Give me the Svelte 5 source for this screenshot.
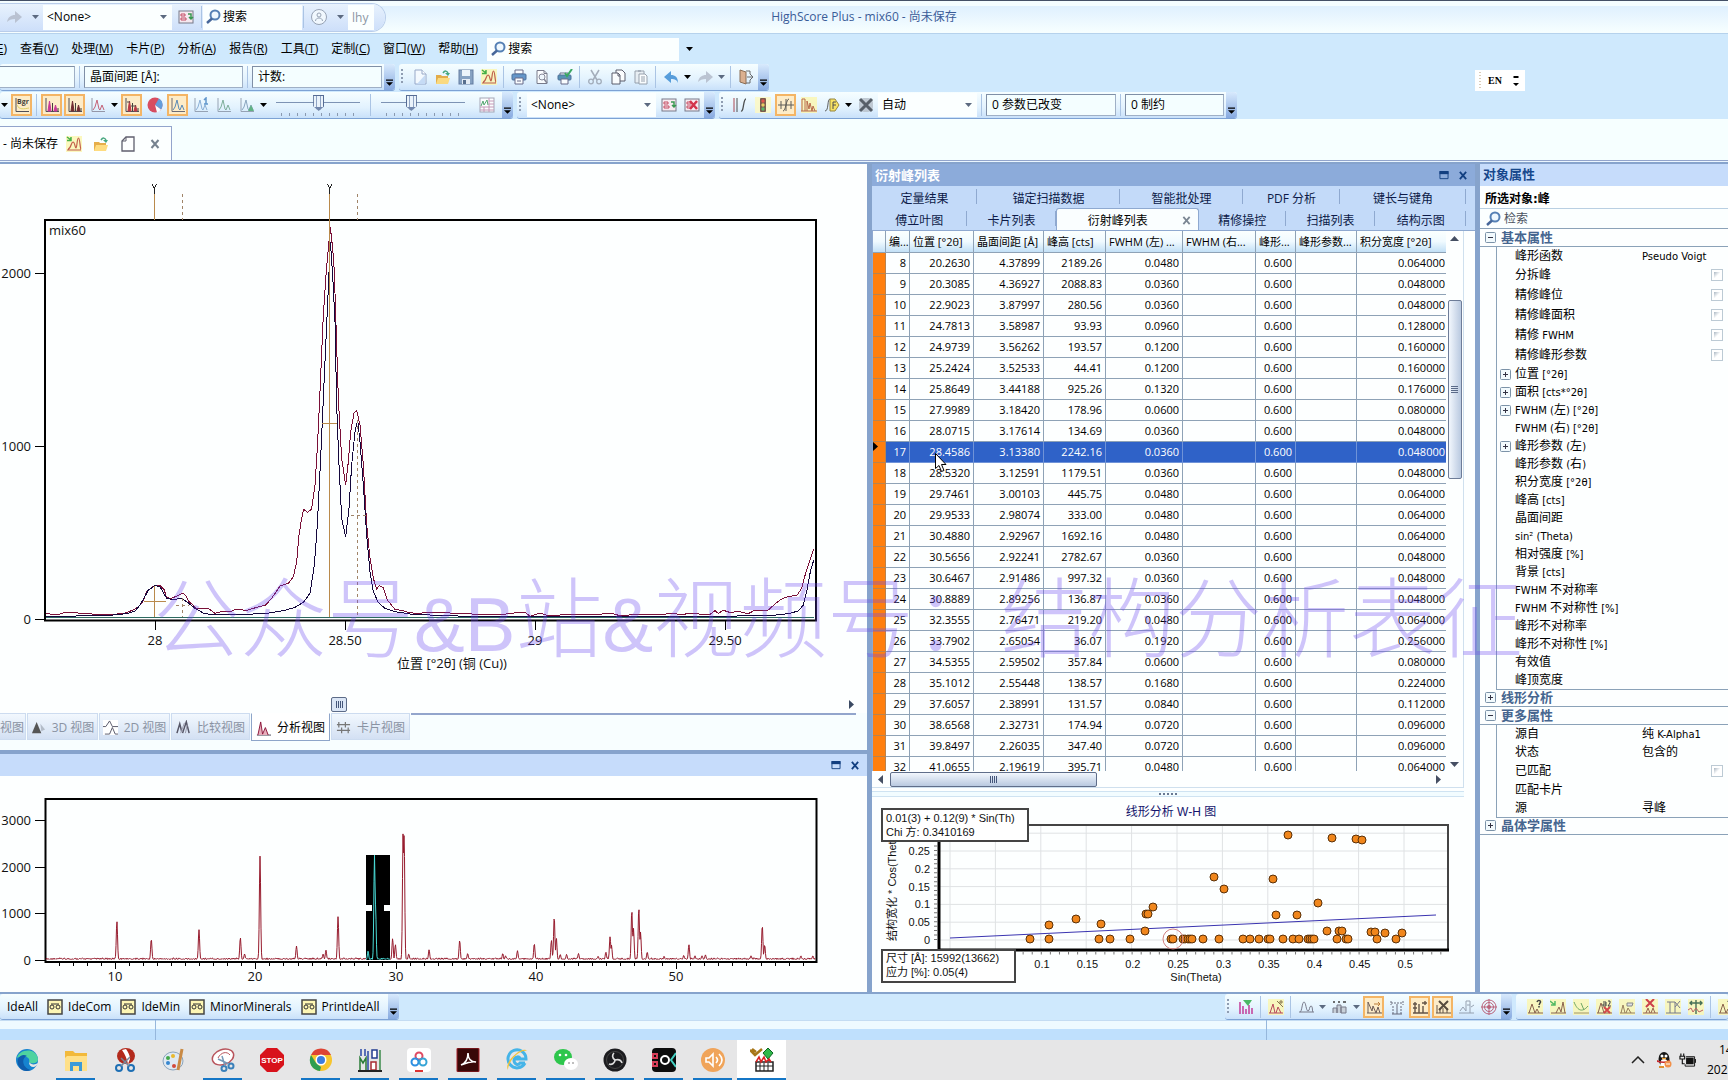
<script>
  const peakIcon = (axis, line, extra = '') =>
    `<path d="M2 1v13.500h13" fill="none" stroke="${axis}"/><path d="M3 13l2-3 2-7 2 9 1 1 2-5 2 5" fill="none" stroke="${line}"/>${extra}`;
  const filledPeak = (fill) =>
    `<path d="M2 1v13.500h13" fill="none" stroke="#334"/><path d="M4 14l1.500-10 1.500 10zM10 14l1.500-6 1.500 6z" fill="${fill}" stroke="${fill}"/><path d="M8.500 6v8m5.500-3v3" stroke="#222"/>`;
  const yellow = '<rect width="16" height="16" fill="#fbf7b4"/>';
  const page = '<path d="M3 1.500h7l3 3v10H3z" fill="#fff" stroke="#667"/><path d="M10 1.500v3h3" fill="none" stroke="#667"/>';
  const cards = '<rect x="1" y="2" width="14" height="12" fill="#fbe9ee" stroke="#667"/><path d="M3 5h4v2H3zM3 9h5v2H3z" fill="none" stroke="#c03048"/>';

  const icons = {
    redoGray: '<path d="M1 13c1-5 4-7 8-7V2l7 6-7 6v-4c-4 0-6 1-8 3z" fill="#b4bccb"/>',
    undo: '<path d="M15 14c0-6-3-8-7-8V2L1 8l7 6v-4c4 0 6 1 7 4z" fill="#3f8fd6"/>',
    cards: cards + '<path d="M10 5h3v5m-2-2l2 2 2-2" fill="none" stroke="#1b8a35" stroke-width="1.500"/>',
    cardsDel: cards + '<path d="M6 4l7 8m0-8l-7 8" stroke="#d0142c" stroke-width="2.500"/>',
    search: '<circle cx="10" cy="6" r="4.500" fill="#eef8ff" stroke="#5580b5" stroke-width="2"/><path d="M7 9.500L2 14" stroke="#47679a" stroke-width="2.500"/>',
    user: '<circle cx="8" cy="8" r="7.500" fill="#f5fbff" stroke="#8c97a8"/><circle cx="8" cy="6" r="2" fill="none" stroke="#8c97a8"/><path d="M4.500 12c0-4 7-4 7 0" fill="none" stroke="#8c97a8"/>',
    newDoc: '<path d="M3 1h7l4 4v10H3z" fill="#f7fbff" stroke="#8a9cc0"/><path d="M13 6v9H5z" fill="#c2d8f4"/><path d="M10 1v4h4" fill="#fff" stroke="#8a9cc0"/>',
    page: '<path d="M6 1h8v14H2V5z" fill="#fff" stroke="#445" stroke-width="1.300"/><path d="M6 1v4H2" fill="none" stroke="#445"/>',
    open: '<path d="M1 6h5l1 1h6v8H1z" fill="#e3a02b"/><path d="M3 9h12l-2 6H1z" fill="#ffd66b"/><path d="M8 4c2-3 4-2 5 0" fill="none" stroke="#2a9a6a" stroke-width="1.500"/><path d="M10 4h5l-2 3z" fill="#2a9a6a"/>',
    save: '<rect x="1" y="1" width="14" height="14" fill="#7794b8" stroke="#506a92"/><rect x="4" y="1" width="8" height="6" fill="#eef4fa"/><path d="M4 10h8v5H4z" fill="#e6ecf4"/><path d="M5 11h3v4H5z" fill="#40587a"/>',
    scan: yellow + '<path d="M1 14h14M2 13c3 0 3-7 5-7s2 6 3 6 1-10 2.500-10S14 13 15 13" fill="none" stroke="#b8442c" stroke-width="1.200"/><path d="M1 1l4 3m0-3v3.500H1" fill="none" stroke="#28a428" stroke-width="1.500"/>',
    print: '<path d="M4 1h8v4H4z" fill="#fff" stroke="#557"/><rect x="1" y="5" width="14" height="6" rx="1" fill="#4f86c0" stroke="#345a8a"/><path d="M4 9h8v6H4z" fill="#fff" stroke="#557"/><path d="M6 12h4" stroke="#557"/>',
    preview: page + '<circle cx="8" cy="8" r="3" fill="#f2f8fc" stroke="#778"/><path d="M10 10l3 4" stroke="#778" stroke-width="1.500"/>',
    quick: '<path d="M3 4h8v3H3z" fill="#fff" stroke="#557"/><rect x="1" y="6" width="13" height="5" rx="1" fill="#3f82a8" stroke="#345a8a"/><path d="M4 10h7v5H4z" fill="#fff" stroke="#557"/><path d="M8 4l2 3 5-7" fill="none" stroke="#1d9b48" stroke-width="2"/>',
    cut: '<path d="M4 1l6 10M12 1L6 11" stroke="#99a2b0" stroke-width="1.500"/><circle cx="4" cy="12.500" r="2.300" fill="none" stroke="#99a2b0" stroke-width="1.300"/><circle cx="12" cy="12.500" r="2.300" fill="none" stroke="#99a2b0" stroke-width="1.300"/>',
    copy: '<path d="M6 1h6l3 3v8H6z" fill="#fff" stroke="#445"/><path d="M2 4h6l2 2v9H2z" fill="#fff" stroke="#445"/><path d="M8 4v3h2" fill="none" stroke="#445"/>',
    paste: '<path d="M2 2h9v12H2z" fill="#e8edf2" stroke="#8a93a0"/><path d="M5 1h3v2H5z" fill="#9aa3b0"/><path d="M6 5h6l2 2v8H6z" fill="#fff" stroke="#8a93a0"/><path d="M8 8h4M8 10h4M8 12h4" stroke="#8a93a0"/>',
    exit: '<path d="M8 2h4v3m0 6v3H8" fill="none" stroke="#555"/><path d="M2 1l6 2v12l-6-2z" fill="#d9a47c" stroke="#7b5638"/><path d="M9 8h5m-2-3l3 3-3 3" fill="none" stroke="#555"/>',
    bgr: '<path d="M2 1v13.500h13" fill="none" stroke="#334"/><path d="M3 8c2 5 7 4 12 3" fill="none" stroke="#d8cc58"/><text x="3" y="7" font-size="7" font-weight="700" font-family="Open Sans" fill="#222">Bgr</text>',
    peakPink: filledPeak('#c01a90'),
    peakDark: filledPeak('#5a0c18'),
    peakRose: peakIcon('#889', '#c0485e'),
    peakRed: filledPeak('#b01c30') + '<path d="M3 5h3m1 4h5" stroke="#333"/>',
    pie: '<circle cx="8" cy="8" r="7.500" fill="#d53146"/><path d="M8 8L12 1.500a7.500 7.500 0 0 1 2 11z" fill="#4e8fd6"/><path d="M8 8l6 4.500a7 7 0 0 1-4 3z" fill="#fff"/>',
    peakBlue: peakIcon('#556', '#3b78b4'),
    peakBlue1: peakIcon('#8a96a8', '#7aa3cf', '<path d="M11 3l2-2v6m-2 0h4" fill="none" stroke="#4a86c4" stroke-width="1.500"/>'),
    peakGreen: peakIcon('#8a96a8', '#6ca389'),
    peakFilled: peakIcon('#8a96a8', '#7a98b4', '<path d="M9 14l3-6 3 6z" fill="#4ba870"/>'),
    grid: '<rect x="1" y="1" width="14" height="14" fill="#fff" stroke="#99a"/><path d="M1 10h14M1 13h14M10 1v14M10 4h5M10 7h5M5 10v5" stroke="#c08aac"/><path d="M2 9l2-5 1 4 3-5 1 5" fill="none" stroke="#3a9a58"/>',
    integral: '<path d="M2 1v14" stroke="#a02a36"/><path d="M5 1v14" stroke="#333"/><path d="M9 14c3 1 2-12 5-12" fill="none" stroke="#333" stroke-width="1.300"/>',
    traffic: '<rect width="16" height="16" fill="#fdf9c4"/><rect x="5" y="1" width="6" height="14" rx="1" fill="#6a4430"/><circle cx="8" cy="4" r="1.700" fill="#e23b30"/><circle cx="8" cy="8" r="1.700" fill="#e8c84a"/><circle cx="8" cy="12" r="1.700" fill="#44b050"/>',
    fit: '<path d="M0 8h16M3 4v8M13 4v8" stroke="#444"/><path d="M5 14c3 0 3-12 6-12M8 2v12" fill="none" stroke="#444"/>',
    multi: yellow + '<path d="M1 14V2h3v12M6 14V4l2 8 1-6 2 8 1-5 2 5M0 14h16" fill="none" stroke="#b0522c"/>',
    fx: '<path d="M1 14c4 0 2-12 5-12" fill="none" stroke="#444"/><path d="M6 2h5l4 6-4 6H6z" fill="#fbe04a" stroke="#8a7420"/><path d="M9 12V5h3M9 8h3" fill="none" stroke="#333"/>',
    cross: '<rect x="1" y="1" width="14" height="14" rx="5" fill="#b9c2cc"/><path d="M2 2l12 12M14 2L2 14" stroke="#3f4650" stroke-width="3"/>',
    tri3d: '<path d="M6 2l5 12H1z" fill="#555"/><path d="M10 4l5 6-4 2z" fill="#b3bcc8"/>',
    two: '<rect width="16" height="16" fill="#fff"/><path d="M0 7h3l4-6 3 6h6M2 15h5l3-7 3 7h3" fill="none" stroke="#556"/>',
    compare: '<path d="M1 14l3-10 2 8M7 14l4-12 3 12" fill="none" stroke="#556" stroke-width="1.600"/><path d="M5 14l4-11M10 14l2-9" stroke="#99a"/>',
    analyze: '<path d="M1 15h15" stroke="#445"/><path d="M2 15L5 1l2 13 3-7 3 8" fill="#e7aebb" stroke="#8b1238"/>',
    cardview: '<path d="M1 5h14M1 11h14M3 2v6M10 2v6M6 8v6M13 8v6" stroke="#777" stroke-width="1.300"/>',
    script: '<rect x="1" y="1" width="14" height="14" fill="#fdf6b4" stroke="#444" stroke-width="1.500"/><circle cx="5" cy="8" r="2" fill="none" stroke="#333"/><circle cx="11" cy="8" r="2" fill="none" stroke="#333"/><path d="M4 5h8" stroke="#333"/>',
    bars: '<path d="M2 3v12M5 7v8M8 10v5M11 6v9M14 9v6" stroke="#c02a90" stroke-width="1.600"/><path d="M5 1h9l-4 6z" fill="#2fae4a"/>',
    wand: yellow + '<path d="M1 14h14M2 14l3-9 2 9M8 14l2-6 3 6" fill="none" stroke="#b02a40"/><path d="M9 2l6 6M13 1v4m2-2h-4" stroke="#776030"/>',
    plain: '<path d="M1 13h15M2 13c2 0 2-10 4-10s2 9 4 9 1-5 3-5 1 6 2 6" fill="none" stroke="#667"/>',
    histo: '<path d="M1 14V9h4v5M5 14V6h4v8M9 14V8h5v6z" fill="#c3cad2" stroke="#667"/><path d="M1 3h2m3 0h2m3 0h3" stroke="#555" stroke-width="2"/>',
    profile: '<path d="M1 14h15M2 14V3l4 9 1-5 3 7 2-6 2 6" fill="none" stroke="#544"/><path d="M8 5h6m-2-2l2 2-2 2" fill="none" stroke="#b06a20"/>',
    spacing: '<path d="M2 4h12M2 2v4m12-4v4M4 7v8m8-8v8" fill="none" stroke="#556" stroke-dasharray="2 1"/><path d="M8 5v10M3 15h10" stroke="#556"/>',
    addPeak: '<path d="M1 14h15M3 3v11M7 5v9M11 7v7M1 5h4M1 9h4M10 4h5m-2-2v4" stroke="#4a3a30" stroke-width="1.400"/>',
    delPeak: '<path d="M1 14h15M2 14V6M5 14V9M8 14V9m4 5V9" stroke="#4a3a30"/><path d="M4 2l9 9M13 2L4 11" stroke="#3c3026" stroke-width="2"/>',
    gray: '<path d="M1 14h15M2 12l3-4 3 4V2h4v12M9 6h3m1 2l3-2" fill="none" stroke="#8a94a4"/>',
    target: '<circle cx="8" cy="8" r="7" fill="none" stroke="#b44a64"/><circle cx="8" cy="8" r="4.500" fill="none" stroke="#b44a64"/><circle cx="8" cy="8" r="2" fill="#b44a64"/><path d="M8 0v16M0 8h16" stroke="#b44a64"/>',
    ask: yellow + '<path d="M1 14h15M2 14l3-9 3 9M8 14l2-4 2 4" fill="none" stroke="#7b4a30"/><path d="M10 3c1-3 5-1 3 1l-1 2m0 1v1.500" fill="none" stroke="#222" stroke-width="1.500"/>',
    insert: yellow + '<path d="M1 14h15M6 14l3-6 2 5 2-10 2 11" fill="none" stroke="#7b4a30"/><path d="M0 2l5 4m0-4v4H1" fill="none" stroke="#3bb04a" stroke-width="1.500"/>',
    curve: yellow + '<path d="M1 14h15" stroke="#98864a"/><path d="M1 3c4 10 9 10 14 4M8 4l3 7" fill="none" stroke="#5a9a4a"/>',
    alpha: yellow + '<path d="M1 14h15M2 14L5 4l3 10" fill="none" stroke="#7b4a30"/><path d="M7 3h3v4H7V5h3M12 2h2v2l-2 3h3" fill="none" stroke="#222"/><path d="M8 8l6 6m0-6l-6 6" stroke="#d02a2a" stroke-width="2"/>',
    smooth: yellow + '<path d="M1 14h15M2 14l2-8 2 8M7 14l2-5 3 5" fill="none" stroke="#8a6a40"/><path d="M8 4l6 0-1 3H8z" fill="#ddd" stroke="#777"/>',
    strip: yellow + '<path d="M1 14h15M4 14l2-5 2 5M9 14l2-5 2 5" fill="none" stroke="#8a4a30"/><path d="M4 0l8 8M12 0L4 8" stroke="#c8202a" stroke-width="2"/>',
    clip: yellow + '<path d="M1 14h15M2 3h8v11M5 14V3M10 3l5 6M15 2l-5 6" fill="none" stroke="#667"/>',
    shift: yellow + '<path d="M2 4h12M4 2L2 4l2 2m8-4l2 2-2 2M8 1v14" fill="none" stroke="#2c5a3a" stroke-width="1.400"/><path d="M0 11l3-2 2 4 3-4 3 4 4-2" fill="none" stroke="#b84848"/>',
  };

  const taskIcons = {
    edge: '<circle cx="12" cy="12" r="11" fill="#1683cf"/><path d="M2 10C4 1 21-1 23 11c0 5-7 5-9 3 2-5-6-7-12-4z" fill="#4fd3a0"/><path d="M12 8c-6 2-5 12 4 14-9 4-15-5-13-11 2-4 6-5 9-3z" fill="#0f5cab"/><path d="M14 14c2 3 6 3 9 1-2 6-9 5-9-1z" fill="#e6e6e6"/>',
    folder: '<path d="M1 3h8l2 2h12v18H1z" fill="#f2b93b"/><path d="M3 8h20v15H1V10z" fill="#ffe089"/><path d="M6 14h12v9h-3v-5H9v5H6z" fill="#3c9bd8"/>',
    snip: '<ellipse cx="13" cy="8" rx="9" ry="8" fill="#b32a1c"/><path d="M9 2c3 4 5 9 6 14l2-5c0-4-2-7-4-10z" fill="#fff"/><circle cx="6" cy="20" r="3" fill="none" stroke="#1e6fb4" stroke-width="2"/><circle cx="18" cy="20" r="3" fill="none" stroke="#1e6fb4" stroke-width="2"/><path d="M8 18L17 9M16 18L8 10" stroke="#789" stroke-width="1.500"/>',
    paint: '<ellipse cx="11" cy="13" rx="10" ry="9" fill="#dfe9f2" stroke="#8aa4bc"/><circle cx="6" cy="10" r="2" fill="#43a84a"/><circle cx="11" cy="8" r="2" fill="#e9b92f"/><circle cx="6" cy="15" r="2" fill="#3686d0"/><circle cx="12" cy="18" r="2" fill="#d24a3c"/><path d="M20 1l-4 21" stroke="#c98a45" stroke-width="3"/>',
    sketch: '<ellipse cx="12" cy="9" rx="11" ry="7.500" fill="#fff" stroke="#b8545c" stroke-width="1.500" transform="rotate(-20 12 9)"/><path d="M7 10C10 4 16 3 19 7" fill="none" stroke="#b8545c"/><circle cx="13" cy="20.500" r="2.500" fill="none" stroke="#3a80ba" stroke-width="2"/><circle cx="20" cy="18" r="2.500" fill="none" stroke="#3a80ba" stroke-width="2"/><path d="M11 8l3 10M18 16L7 11" stroke="#7698b8" stroke-width="1.500"/>',
    stop: '<path d="M7 0h10l7 7v10l-7 7H7l-7-7V7z" fill="#d8121b"/><text x="12" y="15" text-anchor="middle" font-size="8" font-weight="700" font-family="Liberation Sans" fill="#fff">STOP</text>',
    chrome: '<circle cx="12" cy="12" r="11" fill="#f7c52e"/><path d="M2 7a11 11 0 0 1 20 0H12z" fill="#dd4335"/><path d="M2 7l5 8 5 4-1 4A11 11 0 0 1 2 7z" fill="#2f9e51"/><circle cx="12" cy="12" r="5.500" fill="#fff"/><circle cx="12" cy="12" r="4" fill="#3c7de0"/>',
    mdi: '<path d="M2 22V10l3 5 3-5v12" fill="none" stroke="#2a7c38" stroke-width="1.500"/><path d="M13 22v-8h5v8z" fill="#fff" stroke="#a82c34" stroke-width="1.500"/><path d="M3 1v7M7 1v7M10 3v19" stroke="#2b48a8" stroke-width="1.500"/><path d="M14 2h5v8h-5z" fill="#fff" stroke="#223c90" stroke-width="1.500"/><path d="M22 2v20" stroke="#3a8a4a" stroke-width="1.500"/><path d="M0 23h24" stroke="#222" stroke-width="2"/>',
    cloud: '<rect width="24" height="24" rx="4" fill="#fff"/><circle cx="12" cy="8" r="3.500" fill="none" stroke="#e04a62" stroke-width="2"/><circle cx="8" cy="14" r="3.500" fill="none" stroke="#2d8fe2" stroke-width="2"/><circle cx="16" cy="14" r="3.500" fill="none" stroke="#35a4d6" stroke-width="2"/><path d="M8 23h8" stroke="#d33" stroke-width="2"/>',
    acrobat: '<rect x="1" width="22" height="24" rx="1" fill="#380808" stroke="#a82028"/><path d="M5 17c5-2 7-7 7-12 0 6 3 9 8 9-6-1-10 1-15 3z" fill="none" stroke="#fff" stroke-width="1.600"/>',
    ie: '<path d="M20 15A9 9 0 1 1 21 11H9M20 15h-5c-2 3-6 1-6-3 1-4 6-4 6-1" fill="none" stroke="#45b4e8" stroke-width="3"/><path d="M3 22C-2 14 18-3 22 3c-8-2-19 11-19 19z" fill="#eec33c"/>',
    wechat: '<ellipse cx="9" cy="9" rx="9" ry="8" fill="#2dc64c"/><ellipse cx="17" cy="16" rx="7" ry="6" fill="#fff"/><circle cx="6" cy="7" r="1.300" fill="#fff"/><circle cx="12" cy="7" r="1.300" fill="#fff"/><circle cx="15" cy="15" r="1" fill="#aaa"/><circle cx="19" cy="15" r="1" fill="#aaa"/>',
    obs: '<circle cx="12" cy="12" r="11.500" fill="#1c1c1f"/><circle cx="12" cy="12" r="8.500" fill="none" stroke="#444"/><path d="M12 12C9 10 9 7 11 5M12 12c4-1 6 0 7 3M12 12c0 3-3 5-6 4" fill="none" stroke="#ddd" stroke-width="1.700"/>',
    oc: '<rect width="24" height="24" rx="4" fill="#0d0d0d"/><circle cx="13" cy="12" r="4" fill="none" stroke="#fff" stroke-width="2"/><path d="M24 5l-5 7 5 7" fill="none" stroke="#44d0c2" stroke-width="2"/><rect x="1" y="6" width="4" height="4" fill="none" stroke="#d8405a" stroke-width="2"/><rect x="1" y="14" width="4" height="4" fill="none" stroke="#d8405a" stroke-width="2"/>',
    sound: '<circle cx="12" cy="12" r="12" fill="#f0a45a"/><path d="M5 10h3l4-4v12l-4-4H5z" fill="none" stroke="#fff" stroke-width="1.600"/><path d="M15 9c2 2 2 4 0 6M18 6c4 4 4 8 0 12" fill="none" stroke="#fff" stroke-width="1.600"/>',
    highscore: '<path d="M0 2l5 5 7-6M2 1l4 3" fill="none" stroke="#a77618" stroke-width="2.500"/><path d="M18 0l5 5-5 6-5-6z" fill="#2fb84a" stroke="#0d6522"/><rect x="6" y="14" width="17" height="9" fill="#fff" stroke="#222" stroke-width="1.500"/><path d="M6 18h17M10 15v8M14 15v8M18 15v8" stroke="#222"/><path d="M6 14l3-5 2 5 3-5 2 5 3-3 2 3" fill="none" stroke="#d82020" stroke-width="1.500"/>',
  };

  const taskbar = [
    ['edge', 'Edge', ''], ['folder', '文件资源管理器', 'run'], ['snip', '截图', ''], ['paint', '画图', ''],
    ['sketch', '截图工具', 'run'], ['stop', 'Stop', ''], ['chrome', 'Chrome', 'run'], ['mdi', 'MDI', 'run'],
    ['cloud', '网盘', 'run'], ['acrobat', 'Acrobat', 'run'], ['ie', 'Internet Explorer', 'run'], ['wechat', '微信', 'run'],
    ['obs', 'OBS', 'run'], ['oc', 'oCam', 'run'], ['sound', '音量', 'run'], ['highscore', 'HighScore Plus', 'run active'],
  ];

  const menus = [['查看', 'V'], ['处理', 'M'], ['卡片', 'P'], ['分析', 'A'], ['报告', 'R'], ['工具', 'T'], ['定制', 'C'], ['窗口', 'W'], ['帮助', 'H']];

  // '|' separator, 'v' small drop-down arrow, '*' prefix marks a pressed button
  const fileTools = ['newDoc', 'open', 'save', 'scan', '|', 'print', 'preview', 'quick', '|', 'cut', 'copy', 'paste', '|', 'undo', 'v', 'redoGray', 'vg', '|', 'exit'];
  const viewTools = ['v', '*bgr', '|', '*peakPink', '*peakDark', 'peakRose', 'v', '*peakRed', 'pie', '*peakBlue', 'peakBlue1', 'peakGreen', 'peakFilled', 'v'];
  const fitTools = ['integral', 'traffic', '*fit', 'multi', 'fx', 'v', 'cross'];
  const peakTools = ['bars', '|', 'wand', '|', 'plain', 'vg', 'histo', 'vg', '*profile', 'spacing', '*addPeak', '*delPeak', 'gray', 'target'];
  const treatTools = ['ask', 'insert', 'curve', 'alpha', 'smooth', 'strip', 'clip', 'shift', '|', 'ask'];
  const scripts = ['IdeAll', 'IdeCom', 'IdeMin', 'MinorMinerals', 'PrintIdeAll'];

  const viewTabs = [['', '视图', 'cut'], ['tri3d', '3D 视图', ''], ['two', '2D 视图', ''], ['compare', '比较视图', 'wide'], ['analyze', '分析视图', 'wide active'], ['cardview', '卡片视图', 'wide']];

  const tabsTop = [['定量结果', 105], ['锚定扫描数据', 143], ['智能批处理', 123], ['PDF 分析', 97], ['键长与键角', 126]];
  const tabsBottom = [['傅立叶图', 95], ['卡片列表', 90], ['衍射峰列表', 141], ['精修操控', 87], ['扫描列表', 90], ['结构示图', 91]];

  const columns = [['', 13], ['编...', 24], ['位置 [°2θ]', 64], ['晶面间距 [Å]', 70], ['峰高 [cts]', 62], ['FWHM (左) ...', 77], ['FWHM (右...', 73], ['峰形...', 40], ['峰形参数...', 61], ['积分宽度 [°2θ]', 90]];
  const peaks = [
    [8, '20.2630', '4.37899', '2189.26', '0.0480', '0.064000'],
    [9, '20.3085', '4.36927', '2088.83', '0.0360', '0.048000'],
    [10, '22.9023', '3.87997', '280.56', '0.0360', '0.048000'],
    [11, '24.7813', '3.58987', '93.93', '0.0960', '0.128000'],
    [12, '24.9739', '3.56262', '193.57', '0.1200', '0.160000'],
    [13, '25.2424', '3.52533', '44.41', '0.1200', '0.160000'],
    [14, '25.8649', '3.44188', '925.26', '0.1320', '0.176000'],
    [15, '27.9989', '3.18420', '178.96', '0.0600', '0.080000'],
    [16, '28.0715', '3.17614', '134.69', '0.0360', '0.048000'],
    [17, '28.4586', '3.13380', '2242.16', '0.0360', '0.048000'],
    [18, '28.5320', '3.12591', '1179.51', '0.0360', '0.048000'],
    [19, '29.7461', '3.00103', '445.75', '0.0480', '0.064000'],
    [20, '29.9533', '2.98074', '333.00', '0.0480', '0.064000'],
    [21, '30.4880', '2.92967', '1692.16', '0.0480', '0.064000'],
    [22, '30.5656', '2.92241', '2782.67', '0.0360', '0.048000'],
    [23, '30.6467', '2.91486', '997.32', '0.0360', '0.048000'],
    [24, '30.8889', '2.89256', '136.87', '0.0360', '0.048000'],
    [25, '32.3555', '2.76471', '219.20', '0.0480', '0.064000'],
    [26, '33.7902', '2.65054', '36.07', '0.1920', '0.256000'],
    [27, '34.5355', '2.59502', '357.84', '0.0600', '0.080000'],
    [28, '35.1012', '2.55448', '138.57', '0.1680', '0.224000'],
    [29, '37.6057', '2.38991', '131.57', '0.0840', '0.112000'],
    [30, '38.6568', '2.32731', '174.94', '0.0720', '0.096000'],
    [31, '39.8497', '2.26035', '347.40', '0.0720', '0.096000'],
    [32, '41.0655', '2.19619', '395.71', '0.0480', '0.064000'],
  ];
  let selected = $state(17);

  // kind: c = tick box, e = expandable, p = plain
  const basicProps = [
    ['峰形函数', 'p', 'Pseudo Voigt'], ['分拆峰', 'c'], ['精修峰位', 'c'], ['精修峰面积', 'c'], ['精修 FWHM', 'c'], ['精修峰形参数', 'c'],
    ['位置 [°2θ]', 'e'], ['面积 [cts*°2θ]', 'e'], ['FWHM (左) [°2θ]', 'e'], ['FWHM (右) [°2θ]', 'p'], ['峰形参数 (左)', 'e'], ['峰形参数 (右)', 'p'],
    ['积分宽度 [°2θ]', 'p'], ['峰高 [cts]', 'p'], ['晶面间距', 'p'], ['sin² (Theta)', 'p'], ['相对强度 [%]', 'p'], ['背景 [cts]', 'p'],
    ['FWHM 不对称率', 'p'], ['FWHM 不对称性 [%]', 'p'], ['峰形不对称率', 'p'], ['峰形不对称性 [%]', 'p'], ['有效值', 'p'], ['峰顶宽度', 'p'],
  ];
  const moreProps = [['源自', 'p', '纯 K-Alpha1'], ['状态', 'p', '包含的'], ['已匹配', 'c'], ['匹配卡片', 'p'], ['源', 'p', '寻峰']];
  const groups = [['基本属性', basicProps], ['线形分析', null], ['更多属性', moreProps], ['晶体学属性', null]];

  const runs = (text) => text.match(/[\u4e00-\u9fff]+|[^\u4e00-\u9fff]+/g) ?? [];
  const isHan = (run) => /[\u4e00-\u9fff]/.test(run);

  const measured = '138,1345 170,1350 195,1342 220,1342 245,1346 260,1344 275,1347 320,1348 350,1347 375,1344 400,1335 418,1323 430,1307 440,1280 455,1267 465,1262 480,1261 492,1273 500,1298 515,1300 530,1293 548,1284 556,1290 565,1308 590,1330 625,1330 645,1345 660,1341 690,1341 705,1333 720,1333 738,1337 760,1330 797,1320 815,1300 840,1263 865,1255 880,1235 890,1190 897,1110 905,1060 911,1033 922,1042 935,1032 945,960 952,850 960,680 970,450 978,330 985,250 991,187 998,250 1003,320 1008,480 1015,700 1025,880 1037,960 1045,890 1052,800 1062,745 1070,736 1080,780 1090,900 1100,1080 1110,1180 1120,1240 1130,1272 1138,1262 1150,1268 1162,1305 1185,1333 1205,1336 1225,1342 1255,1346 1275,1342 1330,1342 1380,1347 1405,1344 1425,1350 1500,1350 1530,1345 1575,1341 1590,1354 1620,1344 1645,1352 1700,1349 1750,1348 1780,1350 1830,1344 1860,1352 1900,1349 1960,1350 2010,1346 2050,1348 2070,1345 2110,1348 2130,1348 2145,1337 2155,1345 2170,1336 2195,1344 2210,1338 2245,1346 2260,1338 2305,1335 2325,1317 2345,1302 2365,1294 2390,1292 2405,1270 2418,1220 2430,1185 2441,1153';
  const calculated = '138,1354 320,1352 380,1346 405,1338 420,1320 432,1300 445,1275 465,1262 480,1265 500,1300 515,1303 545,1301 560,1310 585,1330 610,1344 640,1350 690,1350 740,1348 800,1345 850,1337 885,1327 910,1312 930,1285 943,1200 952,1080 962,880 970,700 980,480 988,300 991,230 998,330 1005,470 1010,720 1017,900 1025,1060 1037,1115 1047,1030 1055,900 1065,800 1073,765 1080,830 1090,960 1100,1110 1110,1220 1120,1280 1135,1313 1155,1330 1185,1340 1230,1347 1290,1350 1400,1354 2250,1353 2320,1351 2365,1346 2395,1338 2410,1320 2420,1280 2432,1215 2441,1186';

  // overview scan: [2theta, counts]
  const lines = [
    [10.1, 830], [12.55, 450], [15.95, 650], [18.9, 480], [19.2, 130], [20.3, 2230], [22.9, 300], [24.8, 130], [25, 210], [25.86, 930],
    [28, 190], [28.46, 2250], [28.53, 1200], [29.75, 460], [29.95, 330], [30.5, 2750], [30.57, 2700], [30.9, 130], [32.35, 220], [34.53, 420],
    [35.1, 140], [37.6, 140], [37.8, 90], [38.65, 200], [39.85, 350], [41.07, 420], [41.27, 930], [41.42, 480], [41.7, 120], [42.15, 120],
    [43, 140], [44.4, 80], [44.95, 170], [45.25, 500], [45.35, 320], [46.8, 1070], [46.92, 680], [47.3, 1120], [47.42, 600], [47.9, 170],
    [49.1, 80], [50.5, 100], [50.87, 330], [51.3, 90], [51.8, 90], [52.05, 110], [55.3, 90], [56.1, 740], [56.27, 320], [58.85, 90], [59.7, 90],
  ];
  const scan = [];
  for (let i = 0; i <= 1538; i++) {
    const px = 46 + i / 2;
    const theta = 10 + (px - 115.5) / 14.03;
    const noise = Math.abs(Math.sin(i * 12.9898) * 43758.5453) % 1;
    let counts = 14 + noise * noise * 32;
    for (const [at, height] of lines) {
      counts = Math.max(counts, height * Math.exp(-(((theta - at) / 0.065) ** 2)));
    }
    scan.push([px, 184 - counts * 0.0466]);
  }
  const toPoints = (list) => list.map(([x, y]) => `${x},${y.toFixed(1)}`).join(' ');
  const scanPoints = toPoints(scan);
  const zoomPoints = toPoints(scan.filter(([x]) => x >= 366 && x <= 390));

  const whPoints = [
    [158, 142], [177, 128], [177, 142], [204, 122], [229, 127], [227, 142], [238, 142], [258, 142], [273, 134], [274, 117], [276, 117], [281, 110],
    [299, 142], [301, 142], [311, 142], [313, 142], [316, 142], [318, 142], [320, 142], [331, 142], [342, 80], [347, 142], [352, 92], [371, 142],
    [378, 142], [387, 142], [396, 142], [398, 142], [401, 82], [404, 118], [411, 142], [416, 38], [421, 142], [425, 118], [427, 142], [436, 142],
    [438, 142], [440, 142], [442, 142], [446, 106], [455, 134], [460, 41], [465, 142], [467, 134], [470, 134], [474, 142], [476, 142], [484, 42],
    [490, 43], [499, 135], [503, 135], [505, 142], [513, 136], [524, 142], [530, 136],
  ];
  const whX = ['0.1', '0.15', '0.2', '0.25', '0.3', '0.35', '0.4', '0.45', '0.5'];
  const whY = ['0', '0.05', '0.1', '0.15', '0.2', '0.25'];
</script>

{#snippet icon(name)}
  <svg class="icon" viewBox="0 0 16 16" aria-hidden="true">{@html icons[name]}</svg>
{/snippet}

{#snippet caret(gray)}
  <svg class="caret" class:gray viewBox="0 0 7 4" aria-hidden="true"><path d="M0 0h7L3.500 4z" /></svg>
{/snippet}

{#snippet tools(list)}
  {#each list as t}
    {#if t === '|'}
      <span class="sep"></span>
    {:else if t === 'v' || t === 'vg'}
      <button class="drop" aria-label="更多选项">{@render caret(t === 'vg')}</button>
    {:else}
      <button class="tool" class:on={t[0] === '*'} aria-label={t.replace('*', '')}>{@render icon(t.replace('*', ''))}</button>
    {/if}
  {/each}
{/snippet}

{#snippet more()}
  <button class="more" aria-label="工具栏选项">
    <svg viewBox="0 0 8 8" aria-hidden="true"><path d="M0 0h8v1.500H0zM0 3h8L4 7z" /></svg>
  </button>
{/snippet}

{#snippet windowButtons()}
  <span class="window-buttons">
    <button aria-label="最大化"><svg viewBox="0 0 10 10"><path d="M.5.5h9v8h-9z" fill="none" stroke="currentColor" /><path d="M0 0h10v3.500H0z" fill="currentColor" /></svg></button>
    <button aria-label="关闭"><svg viewBox="0 0 10 10"><path d="M1.500 1l7 8m0-8l-7 8" stroke="currentColor" stroke-width="2" /></svg></button>
  </span>
{/snippet}

{#snippet mixed(text)}
  {#each runs(text) as run}<span class:latin={!isHan(run)}>{run}</span>{/each}
{/snippet}

<div class="app">
  <header class="title">
    <div class="quick">
      <button class="tool" aria-label="重做">{@render icon('redoGray')}</button>
      <button class="drop" aria-label="重做列表">{@render caret(true)}</button>
      <label class="combo quick-combo">
        <select aria-label="快速访问"><option>&lt;None&gt;</option></select>
        {@render caret(true)}
      </label>
      <button class="tool" aria-label="卡片">{@render icon('cards')}</button>
      <span class="sep"></span>
      <label class="search quick-search">{@render icon('search')}<input aria-label="搜索" value="搜索" /></label>
      <span class="sep"></span>
      <button class="tool" aria-label="用户">{@render icon('user')}</button>
      <button class="drop" aria-label="用户列表">{@render caret(true)}</button>
      <span class="user-name">lhy</span>
    </div>
    <h1>HighScore Plus - mix60 - 尚未保存</h1>
    <div></div>
  </header>

  <nav class="menu">
    <a class="first" href="#edit"><u>E</u>)</a>
    {#each menus as [name, key]}
      <a href="#{key}">{name}(<u>{key}</u>)</a>
    {/each}
    <label class="search menu-search">{@render icon('search')}<input aria-label="菜单搜索" value="搜索" /></label>
    <button class="drop menu-drop" aria-label="搜索选项">{@render caret(false)}</button>
  </nav>

  <div class="bars">
    <div class="bar">
      <div class="field field-a"></div>
      <span class="sep"></span>
      <div class="field field-b">晶面间距 [Å]:</div>
      <span class="sep"></span>
      <div class="field field-c">计数:</div>
      {@render more()}
    </div>
    <div class="bar">
      <span class="grip"></span>
      {@render tools(fileTools)}
      {@render more()}
    </div>
    <div class="ime"><span class="dots"></span><span>EN</span><svg viewBox="0 0 6 12" aria-hidden="true"><path d="M.5 1h5v2h-5zM0 8h6L3 11z" /></svg></div>
  </div>

  <div class="bars">
    <div class="bar">
      {@render tools(viewTools)}
      <div class="slider"><input type="range" min="0" max="100" value="51" aria-label="宽度" /><span class="ticks"></span></div>
      <span class="sep"></span>
      <div class="slider"><input type="range" min="0" max="100" value="34" aria-label="高度" /><span class="ticks"></span></div>
      <button class="tool grid-tool" aria-label="网格">{@render icon('grid')}</button>
      {@render more()}
    </div>
    <div class="bar">
      <span class="grip"></span>
      <label class="combo card-combo">
        <select aria-label="卡片集"><option>&lt;None&gt;</option></select>
        {@render caret(true)}
      </label>
      {@render tools(['cards', 'cardsDel'])}
      {@render more()}
    </div>
    <div class="bar">
      <span class="grip"></span>
      {@render tools(fitTools)}
      <label class="combo auto-combo">
        <select aria-label="模式"><option>自动</option></select>
        {@render caret(true)}
      </label>
      <span class="sep"></span>
      <div class="field field-d">0 参数已改变</div>
      <span class="sep"></span>
      <div class="field field-e">0 制约</div>
      {@render more()}
    </div>
  </div>

  <div class="documents">
    <div class="document">
      <span>- 尚未保存</span>
      <button class="tool" aria-label="扫描">{@render icon('scan')}</button>
      <button class="tool" aria-label="打开">{@render icon('open')}</button>
      <button class="tool" aria-label="文档">{@render icon('page')}</button>
      <button class="close" aria-label="关闭文档"><svg viewBox="0 0 10 10"><path d="M1.500 1l7 8m0-8l-7 8" stroke="currentColor" stroke-width="2" /></svg></button>
    </div>
  </div>

  <main class="workspace">
    <div class="left">
      <section class="pane analysis">
        <svg class="chart" viewBox="0 -1 867 531" role="img" aria-label="分析视图">
          <path class="frame" d="M45 55h771v400.500H45z" />
          <path class="axis" d="M35 108h10M35 281.500h10M35 454h10M155.500 456v9M345.500 456v9M535.500 456v9M725.500 456v9" />
          <g class="num end">
            <text x="31" y="113">2000</text><text x="31" y="286">1000</text><text x="31" y="459">0</text>
          </g>
          <g class="num mid">
            <text x="155" y="480">28</text><text x="345" y="480">28.50</text><text x="535" y="480">29</text><text x="725" y="480">29.50</text>
            <text x="452" y="503">位置 [°2θ] (铜 (Cu))</text>
          </g>
          <text class="num" x="49" y="70">mix60</text>
          <g class="trace" transform="scale(.3333333)">
            <path stroke="#2c6a60" d="M138 1357h2305" />
            <polyline stroke="#7a1038" points={measured} />
            <polyline stroke="#14083c" points={calculated} />
            <path stroke="#b98a4c" d="M463 87v78M463 1262v95M433 1309h64M989 87v1270M967 775h43" />
            <path stroke="#a08468" stroke-dasharray="3 3" d="M547 87v78M547 1300v57M1072 87v78M1072 765v592M528 1322h40M1052 1051h45" />
            <path stroke="#222" d="M457 57l6 15 6-15M463 70v17M983 57l6 15 6-15M989 70v17" />
          </g>
        </svg>
        <div class="zoom-scroll"><span class="thumb-mini"></span><svg viewBox="0 0 5 9" aria-hidden="true"><path d="M0 0l5 4.500L0 9z" /></svg></div>
        <div class="view-tabs">
          {#each viewTabs as [name, label, kind]}
            <button class="view-tab {kind}">{#if name}{@render icon(name)}{/if}<span>{label}</span></button>
          {/each}
          <span class="rest"></span>
        </div>
      </section>

      <section class="pane overview">
        <div class="pane-head light">{@render windowButtons()}</div>
        <svg class="chart" viewBox="0 0 867 216" role="img" aria-label="概览">
          <path class="frame" d="M45.500 23h771v163h-771z" />
          <path class="axis" d="M35 44.500h10M35 91.500h10M35 137.500h10M35 184.500h10M115.500 187v6M255.500 187v6M396 187v6M536.500 187v6M676.500 187v6" />
          <path class="axis" stroke-dasharray="1 13.030" d="M59 188.500h757" stroke-width="3" />
          <g class="num end">
            <text x="31" y="49">3000</text><text x="31" y="96">2000</text><text x="31" y="142">1000</text><text x="31" y="189">0</text>
          </g>
          <g class="num mid">
            <text x="115" y="205">10</text><text x="255" y="205">20</text><text x="396" y="205">30</text><text x="536" y="205">40</text><text x="676" y="205">50</text>
          </g>
          <polyline class="scan" points={scanPoints} />
          <path d="M366 79h24v50h-6v6h6v49h-24v-49h6v-6h-6z" />
          <polyline class="scan picked" points={zoomPoints} />
        </svg>
      </section>
    </div>

    <section class="pane list">
      <div class="pane-head"><h2>衍射峰列表</h2>{@render windowButtons()}</div>
      <div class="tabs">
        <div class="tab-row">
          {#each tabsTop as [name, share]}<button class="tab" style="flex-grow: {share}">{name}</button>{/each}
        </div>
        <div class="tab-row">
          {#each tabsBottom as [name, share]}
            <button class="tab" class:active={name === '衍射峰列表'} style="flex-grow: {share}">{name}
              {#if name === '衍射峰列表'}<svg viewBox="0 0 10 10" aria-hidden="true"><path d="M1.500 1l7 8m0-8l-7 8" stroke="currentColor" stroke-width="2" /></svg>{/if}
            </button>
          {/each}
        </div>
      </div>
      <div class="table-area">
        <div class="table-view">
          <table>
            <colgroup>{#each columns as [, width]}<col style="width: {width}px" />{/each}</colgroup>
            <thead><tr>{#each columns as [name]}<th>{name}</th>{/each}</tr></thead>
            <tbody>
              {#each peaks as [no, pos, spacing, height, fwhm, breadth]}
                <tr class:selected={no === selected} onclick={() => (selected = no)}>
                  <td class="flag">{#if no === selected}<svg viewBox="0 0 5 9" aria-hidden="true"><path d="M0 0l5 4.500L0 9z" /></svg>{/if}</td>
                  <td>{no}</td>
                  <td class="pos">{pos}
                    {#if no === 17}<svg class="cursor" viewBox="0 0 12 19" aria-hidden="true"><path d="M.5.5v15l3.500-3 2.500 6 2.500-1-2.500-6h4.500z" /></svg>{/if}
                  </td>
                  <td>{spacing}</td><td>{height}</td><td>{fwhm}</td><td></td><td>0.600</td><td></td><td>{breadth}</td>
                </tr>
              {/each}
            </tbody>
          </table>
        </div>
        <div class="vscroll">
          <svg viewBox="0 0 9 5" aria-hidden="true"><path d="M0 5l4.500-5L9 5z" /></svg>
          <span class="vthumb"></span>
          <svg viewBox="0 0 9 5" aria-hidden="true"><path d="M0 0l4.500 5L9 0z" /></svg>
        </div>
      </div>
      <div class="hscroll">
        <svg viewBox="0 0 5 9" aria-hidden="true"><path d="M5 0L0 4.500 5 9z" /></svg>
        <span class="hthumb"></span>
        <svg viewBox="0 0 5 9" aria-hidden="true"><path d="M0 0l5 4.500L0 9z" /></svg>
      </div>
      <div class="splitter"></div>
      <svg class="chart wh" viewBox="0 0 603 195" role="img" aria-label="线形分析 W-H 图">
        <g class="grid">
          {#each Array(11) as _, i}<path d="M{78 + i * 45.4} 28v125" />{/each}
          {#each Array(7) as _, i}<path d="M67 {143 - i * 17.8}h509" />{/each}
        </g>
        <path d="M67 28h509v125" fill="none" stroke="#444" stroke-width="2" />
        <path d="M67 27v126h510" fill="none" stroke="#000" stroke-width="3" />
        <path d="M78 156h498" stroke="#777" stroke-width="3" stroke-dasharray="1 8.080" />
        <path d="M64 143V30" stroke="#777" stroke-width="4" stroke-dasharray="1 3.450" />
        <text class="wh-title" x="299" y="19">线形分析 W-H 图</text>
        <g class="small mid">
          {#each whX as label, i}<text x={170 + i * 45.4} y="171">{label}</text>{/each}
          <text x="324" y="184">Sin(Theta)</text>
        </g>
        <g class="small end">
          {#each whY as label, i}<text x="58" y={147 - i * 17.8}>{label}</text>{/each}
        </g>
        <text class="small" transform="translate(24 144) rotate(-90)">结构宽化 * Cos(Theta)</text>
        <path d="M78 141L564 118" stroke="#3a34b0" />
        {#each whPoints as [x, y]}<circle class="dot" cx={x} cy={y} r="4" />{/each}
        <circle cx="301" cy="142" r="10" fill="none" stroke="#d08080" />
        <g class="note">
          <path d="M10 12h146v32H10zM10 153h133v32H10z" />
          <g class="small">
            <text x="14" y="25">0.01(3) + 0.12(9) * Sin(Th)</text>
            <text x="14" y="39">Chi 方: 0.3410169</text>
            <text x="14" y="165">尺寸 [Å]: 15992(13662)</text>
            <text x="14" y="179">应力 [%]: 0.05(4)</text>
          </g>
        </g>
      </svg>
    </section>

    <section class="pane props">
      <div class="pane-head light"><h2>对象属性</h2></div>
      <p class="object">所选对象:峰</p>
      <label class="search prop-search">{@render icon('search')}<input aria-label="检索" placeholder="检索" /></label>
      {#each groups as [title, rows], g}
        <button class="group" aria-expanded={rows !== null}>
          <svg class="box" viewBox="0 0 11 11"><rect x=".5" y=".5" width="10" height="10" rx="1" /><path d={rows ? 'M3 5.500h5' : 'M3 5.500h5M5.500 3v5'} /></svg>
          <span>{title}</span>
        </button>
        {#if rows}
          <div class="rows">
            {#each rows as [name, kind, value], i}
              <div class="prop" class:tall={kind === 'c'}>
                <span class="mark">{#if kind === 'e'}<svg class="box" viewBox="0 0 11 11"><rect x=".5" y=".5" width="10" height="10" rx="1" /><path d="M3 5.500h5M5.500 3v5" /></svg>{/if}</span>
                {#if kind === 'c'}
                  <label class="name" for="p{g}-{i}">{@render mixed(name)}</label>
                  <input type="checkbox" id="p{g}-{i}" />
                {:else}
                  <span class="name">{@render mixed(name)}</span>
                  <span>{#if value}{@render mixed(value)}{/if}</span>
                {/if}
              </div>
            {/each}
          </div>
        {/if}
      {/each}
    </section>
  </main>

  <div class="bars bottom">
    <div class="bar scripts">
      {#each scripts as name, i}
        <button class="script">{#if i}{@render icon('script')}{/if}<span>{name}</span></button>
      {/each}
      {@render more()}
    </div>
    <div class="bar push">
      <span class="grip"></span>
      {@render tools(peakTools)}
      {@render more()}
    </div>
    <div class="bar treat">
      <span class="grip"></span>
      {@render tools(treatTools)}
    </div>
  </div>
  <div class="status"><span></span><span></span><span></span></div>

  <footer class="taskbar">
    {#each taskbar as [name, label, kind]}
      <button class="task {kind}" aria-label={label}><svg viewBox="0 0 24 24">{@html taskIcons[name]}</svg></button>
    {/each}
    <div class="tray">
      <svg viewBox="0 0 14 8" aria-hidden="true"><path d="M1 7l6-6 6 6" fill="none" stroke="#222" stroke-width="1.500" /></svg>
      <svg class="qq" viewBox="0 0 16 16" aria-hidden="true"><ellipse cx="8" cy="7" rx="5.500" ry="7" fill="#161616" /><ellipse cx="8" cy="11" rx="3.500" ry="4" fill="#fff" /><circle cx="6" cy="4" r="1.500" fill="#fff" /><circle cx="10" cy="4" r="1.500" fill="#fff" /><path d="M6 6.500h4" stroke="#f0a030" stroke-width="1.500" /><path d="M1 8q7 3 13 0v2q-6 2-13 0z" fill="#c8282c" /><path d="M3 15h5" stroke="#e09030" stroke-width="2" /><circle cx="12" cy="12" r="3.500" fill="#f2904a" /><path d="M10 12h4" stroke="#fff" /></svg>
      <svg class="battery" viewBox="0 0 18 14" aria-hidden="true"><path d="M2 0v3M5 0v3M1 3h5v3H1zM3.500 6v5H6" fill="none" stroke="#111" stroke-width="1.200" /><rect x="7.500" y="4.500" width="8" height="7" fill="#111" /><path d="M6.500 11.500v2h10v-10h-9" fill="none" stroke="#111" /><path d="M17.500 6v4" stroke="#111" /></svg>
      <div class="clock"><span>14</span><span>202</span></div>
    </div>
  </footer>

  <div class="watermark" aria-hidden="true">公众号<b>&amp;B</b>站<b>&amp;</b>视频号：结构分析表征</div>
</div>

<style>
  :global(body) {
    margin: 0;
    overflow-x: hidden;
  }

  .app {
    position: relative;
    overflow: hidden;
    background: #cfe9fd;
    color: #000;
    font: 12px/16px "Open Sans", "Noto Sans CJK SC", sans-serif;
  }

  button,
  input,
  select {
    font: inherit;
    color: inherit;
    margin: 0;
    padding: 0;
    border: 0;
    background: none;
  }

  a {
    color: inherit;
    text-decoration: none;
  }

  svg {
    display: block;
    flex: none;
  }

  h1,
  h2,
  p {
    margin: 0;
    font-weight: 400;
    font-size: 12px;
  }

  .icon {
    width: 16px;
    height: 16px;
  }

  .tool .icon {
    opacity: 0.85;
  }

  .caret {
    width: 7px;
    height: 4px;
    fill: #000;
  }

  .caret.gray {
    fill: #5c6a80;
  }

  .title {
    display: grid;
    grid-template-columns: 1fr auto 1fr;
    align-items: center;
    height: 34px;
    box-sizing: border-box;
    border-top: 1px solid #445066;
    border-bottom: 1px solid #b6d2ec;
    background: linear-gradient(#f4fdff 15%, #dff0fe 16%, #f6feff 95%);
  }

  .title h1 {
    color: #3a5c98;
  }

  .quick {
    display: flex;
    align-items: center;
    width: 385px;
    height: 27px;
    background: linear-gradient(#e8f2fd, #cddffa);
    border-radius: 0 14px 14px 0;
    box-shadow: 0 0 0 1px #b9cdea;
  }

  .quick .tool {
    width: 28px;
  }

  .quick .drop {
    width: 15px;
  }

  .quick .sep {
    margin: 0 1px;
  }

  .combo,
  .search {
    position: relative;
    display: flex;
    align-items: center;
    background: #fbffff;
    box-sizing: border-box;
  }

  .combo select {
    appearance: none;
    width: 100%;
    height: 100%;
    padding-left: 4px;
  }

  .combo .caret {
    position: absolute;
    right: 5px;
  }

  .quick-combo {
    width: 129px;
    height: 25px;
  }

  .quick-search {
    width: 99px;
    height: 25px;
    padding-left: 2px;
    gap: 2px;
  }

  .search input {
    flex: 1;
    min-width: 0;
  }

  .user-name {
    width: 22px;
    height: 25px;
    padding-left: 4px;
    line-height: 25px;
    background: #fbffff;
    color: #8c96a4;
  }

  .menu {
    display: flex;
    align-items: center;
    height: 30px;
    gap: 13px;
  }

  .menu .first {
    display: flex;
    justify-content: flex-end;
    width: 7px;
  }

  .menu-search {
    width: 192px;
    height: 23px;
    padding-left: 3px;
    gap: 2px;
    margin-left: -4px;
  }

  .menu-drop {
    margin-left: -7px;
  }

  .bars {
    display: flex;
    align-items: flex-start;
    gap: 4px;
    height: 28px;
  }

  .bars + .bars {
    height: 27px;
  }

  .bar {
    display: flex;
    align-items: center;
    gap: 2px;
    height: 26px;
    background: linear-gradient(#f6feff, #e2f2fe 60%, #c9e1fa);
    border-bottom: 1px solid #7da2d4;
    border-radius: 3px;
  }

  .tool {
    display: flex;
    align-items: center;
    justify-content: center;
    width: 21px;
    height: 22px;
    box-sizing: border-box;
  }

  .tool.on {
    border: 2px solid #f4b565;
    background: #fdecc8;
  }

  .drop {
    display: flex;
    align-items: center;
    justify-content: center;
    width: 9px;
    height: 20px;
  }

  .sep {
    flex: none;
    width: 1px;
    height: 22px;
    margin: 0 2px;
    background: #aac4e4;
  }

  .grip {
    width: 2px;
    height: 16px;
    margin: 0 4px 0 2px;
    background: repeating-linear-gradient(#8f9db2 0 2px, transparent 2px 4px);
  }

  .more {
    display: flex;
    align-items: flex-end;
    align-self: stretch;
    justify-content: center;
    width: 11px;
    padding-bottom: 3px;
    background: linear-gradient(#d8eafd, #87aae0);
    border-radius: 0 3px 3px 0;
  }

  .more svg {
    width: 7px;
    height: 8px;
  }

  .field {
    box-sizing: border-box;
    height: 22px;
    padding: 2px 5px;
    border: 1px solid #9fb0c6;
    border-left-color: #7f8fa6;
    border-top-color: #7f8fa6;
    background: #f4feff;
    white-space: nowrap;
  }

  .field-a {
    width: 75px;
    border-left: 0;
  }

  .field-b {
    width: 159px;
  }

  .field-c {
    width: 130px;
  }

  .field-d {
    width: 130px;
  }

  .field-e {
    width: 99px;
  }

  .ime {
    display: flex;
    align-items: center;
    width: 50px;
    height: 21px;
    margin: 6px 203px 0 auto;
    padding: 0 6px 0 4px;
    background: #fff;
    box-sizing: border-box;
    font: 700 10px/12px "Liberation Serif", serif;
  }

  .dots {
    width: 2px;
    height: 18px;
    margin-right: 7px;
    background: repeating-linear-gradient(#d9cbb8 0 1px, transparent 1px 3px);
  }

  .ime svg {
    width: 6px;
    height: 12px;
    margin-left: auto;
  }

  .slider {
    display: flex;
    flex-direction: column;
    width: 84px;
    margin: 0 6px;
  }

  .slider input {
    appearance: none;
    width: 84px;
    height: 17px;
    background: linear-gradient(transparent 7px, #7d93b4 7px 8px, transparent 8px);
  }

  .slider input::-webkit-slider-thumb {
    appearance: none;
    width: 11px;
    height: 16px;
    background:
      linear-gradient(#566c94, #566c94) top / 100% 1px no-repeat,
      linear-gradient(transparent 12px, #7288ae 12px),
      linear-gradient(90deg, #566c94 1px, #eaf3fb 1px 3px, #8fa4c4 3px 4px, #eaf3fb 4px 7px, #8fa4c4 7px 8px, #eaf3fb 8px 10px, #566c94 10px);
    clip-path: polygon(0 0, 100% 0, 100% 70%, 50% 100%, 0 70%);
  }

  .ticks {
    height: 3px;
    margin: 1px 5px 0;
    background: repeating-linear-gradient(90deg, #8a9ab0 0 1px, transparent 1px 8px);
  }

  .grid-tool {
    margin: 0 3px;
  }

  .card-combo {
    width: 129px;
    height: 24px;
  }

  .auto-combo {
    width: 99px;
    height: 24px;
  }

  .documents {
    display: flex;
    align-items: flex-end;
    height: 41px;
    background: #f6ffff;
    border-bottom: 1px solid #93a5cc;
  }

  .document {
    display: flex;
    align-items: center;
    gap: 6px;
    width: 172px;
    height: 34px;
    padding-left: 3px;
    box-sizing: border-box;
    border: solid #93a5cc;
    border-width: 1px 1px 0 0;
    background: #fcffff;
  }

  .close {
    width: 20px;
    display: flex;
    justify-content: center;
    color: #76828f;
  }

  .close svg {
    width: 10px;
    height: 10px;
  }

  .workspace {
    display: grid;
    grid-template-columns: minmax(0, 867fr) minmax(0, 603fr) minmax(0, 248fr);
    gap: 5px;
    padding: 2px 0;
    background: #86a3cc;
    border-top: 1px solid #eaf6ff;
  }

  .left {
    display: flex;
    flex-direction: column;
    gap: 4px;
  }

  .pane {
    min-width: 0;
    background: #fdffff;
  }

  .chart {
    width: 100%;
    height: auto;
  }

  .frame {
    fill: none;
    stroke: #000;
    stroke-width: 2;
  }

  .axis {
    fill: none;
    stroke: #000;
    shape-rendering: crispEdges;
  }

  .num {
    font-size: 13px;
    fill: #111;
  }

  .small {
    font: 11px "Liberation Sans", "Noto Sans CJK SC", sans-serif;
    fill: #111;
  }

  .end {
    text-anchor: end;
  }

  .mid {
    text-anchor: middle;
  }

  .trace * {
    fill: none;
    vector-effect: non-scaling-stroke;
    shape-rendering: crispEdges;
  }

  .scan {
    fill: none;
    stroke: #961a2c;
  }

  .picked {
    stroke: #4adcd8;
  }

  .zoom-scroll {
    display: flex;
    align-items: center;
    justify-content: space-between;
    height: 18px;
    padding: 0 13px 0 38%;
  }

  .zoom-scroll svg {
    width: 5px;
    height: 11px;
    fill: #3b4a63;
  }

  .thumb-mini {
    width: 16px;
    height: 15px;
    margin-left: 2px;
    box-sizing: border-box;
    border: 1px solid #5d6c88;
    border-radius: 2px;
    background: repeating-linear-gradient(90deg, #44567a 0 1px, transparent 1px 2px) center / 7px 7px no-repeat, #dbe6f6;
  }

  .view-tabs {
    display: flex;
    align-items: flex-start;
    gap: 1px;
    height: 37px;
    padding-right: 11px;
    background: #f8feff;
  }

  .view-tab {
    display: flex;
    align-items: center;
    justify-content: center;
    gap: 6px;
    width: 71px;
    height: 27px;
    padding-top: 2px;
    box-sizing: border-box;
    border: 1px solid #cddcf0;
    background: linear-gradient(#f2f8fe, #d3e0f3);
    color: #8a93a3;
    white-space: nowrap;
  }

  .view-tab.wide {
    width: 79px;
  }

  .view-tab.cut {
    width: 26px;
    justify-content: flex-start;
    border-left: 0;
  }

  .view-tab .icon {
    width: 15px;
    height: 15px;
  }

  .view-tab.active {
    height: 28px;
    background: #fff;
    border-color: #8ea5c9;
    border-top-color: #fff;
    color: #000;
  }

  .rest {
    flex: 1;
    height: 2px;
    background: #93a5cc;
  }

  .pane-head {
    display: flex;
    align-items: center;
    height: 22px;
    padding-left: 3px;
    background: #8cabda;
    color: #fff;
  }

  .pane-head.light {
    background: #c6dcfb;
    color: #17488c;
  }

  .pane-head h2 {
    font-size: 13px;
    font-weight: 700;
  }

  .window-buttons {
    display: flex;
    gap: 9px;
    margin-left: auto;
    padding-right: 7px;
    color: #123f80;
  }

  .window-buttons svg {
    width: 10px;
    height: 9px;
  }

  .tabs {
    padding-right: 9px;
    background: #c3daf9;
    border-bottom: 1px solid #8fa9d0;
    color: #0d1a48;
  }

  .tab-row {
    display: flex;
    height: 22px;
  }

  .tab {
    position: relative;
    flex: 1 1 0;
    min-width: 0;
    padding-top: 3px;
    white-space: nowrap;
    background: linear-gradient(#8fa9d0, #8fa9d0) right 3px / 1px 15px no-repeat;
  }

  .tab.active {
    text-indent: -20px;
    background: #fafeff;
    border: solid #8fa9d0;
    border-width: 1px 1px 0;
    border-radius: 3px 3px 0 0;
    color: #000;
  }

  .tab svg {
    position: absolute;
    right: 7px;
    top: 7px;
    width: 9px;
    height: 9px;
    color: #7b8794;
  }

  .table-area {
    display: flex;
    height: 540px;
    margin-right: 11px;
    border-right: 1px solid #cfe0ee;
  }

  .table-view {
    flex: 1;
    min-width: 0;
    overflow: hidden;
    border-left: 1px solid #8fa9d0;
  }

  table {
    width: 100%;
    table-layout: fixed;
    border-collapse: separate;
    border-spacing: 0;
    font-size: 11px;
    line-height: 16px;
  }

  th,
  td {
    box-sizing: border-box;
    height: 21px;
    padding: 0 3px 0 2px;
    border: solid #8ea2b6;
    border-width: 0 1px 1px 0;
    text-align: right;
    white-space: nowrap;
    overflow: hidden;
  }

  th {
    height: 22px;
    padding: 0 0 0 3px;
    text-align: left;
    font-weight: 400;
    background: linear-gradient(#fbffff, #f0faff 50%, #c2e0f6);
  }

  th:last-child,
  td:last-child {
    padding-right: 2px;
    border-right: 0;
  }

  .flag {
    padding: 0;
    vertical-align: top;
    background: #ff7f0e;
    border-color: #b9834e;
  }

  .flag svg {
    width: 5px;
    height: 9px;
  }

  .pos {
    position: relative;
    overflow: visible;
  }

  .cursor {
    position: absolute;
    z-index: 2;
    left: 25px;
    top: 11px;
    width: 12px;
    height: 19px;
    fill: #fff;
    stroke: #000;
  }

  .selected td:not(.flag) {
    background: #2f62c8;
    color: #fff;
    border-color: #6f93d8;
  }

  .vscroll {
    display: flex;
    flex-direction: column;
    align-items: center;
    width: 17px;
    padding: 5px 0 4px;
    box-sizing: border-box;
  }

  .vscroll svg {
    width: 9px;
    height: 5px;
    fill: #454f63;
  }

  .vthumb {
    width: 14px;
    height: 179px;
    margin: 59px 0 auto;
    box-sizing: border-box;
    border: 1px solid #6d7c98;
    border-radius: 2px;
    background: repeating-linear-gradient(#5a6a88 0 1px, transparent 1px 2px) center / 7px 7px no-repeat, linear-gradient(90deg, #f2f7fd, #b9c9e0);
  }

  .hscroll {
    display: flex;
    align-items: center;
    height: 17px;
    box-sizing: border-box;
    margin-right: 11px;
    padding: 0 22px 0 6px;
    border: solid #cfe0ee;
    border-width: 0 1px 1px 0;
  }

  .hscroll svg {
    width: 5px;
    height: 9px;
    fill: #454f63;
  }

  .hthumb {
    width: 207px;
    height: 15px;
    margin: 0 auto 0 7px;
    box-sizing: border-box;
    border: 1px solid #5f6e8a;
    border-radius: 2px;
    background: repeating-linear-gradient(90deg, #44567a 0 1px, transparent 1px 2px) center / 7px 7px no-repeat, linear-gradient(#f2f7fd, #b9c9e0);
  }

  .splitter {
    height: 4px;
    margin: 3px 11px 0 0;
    border: solid #cfe3f2;
    border-width: 1px 0;
    background: repeating-linear-gradient(90deg, #6a7892 0 2px, transparent 2px 4px) center / 18px 2px no-repeat, #f2fcff;
  }

  .grid path {
    stroke: #dfe2e4;
  }

  .wh-title {
    font: 12px "Liberation Sans", "Noto Sans CJK SC", sans-serif;
    fill: #14146c;
    text-anchor: middle;
  }

  .dot {
    fill: #f0861c;
    stroke: #5a3008;
  }

  .note > path {
    fill: #fff;
    stroke: #444;
    stroke-width: 2;
  }

  .props {
    font-family: "DejaVu Sans", "Noto Sans CJK SC", sans-serif;
  }

  .latin {
    font-size: 10px;
    white-space: pre;
  }

  .object {
    height: 23px;
    padding: 2px 0 0 5px;
    line-height: 22px;
    font-weight: 700;
    border-bottom: 1px solid #b9cfe2;
    box-sizing: border-box;
  }

  .prop-search {
    height: 20px;
    padding-left: 5px;
    gap: 3px;
    border-bottom: 1px solid #8ba2b8;
  }

  .prop-search input::placeholder {
    color: #4a5260;
    opacity: 1;
  }

  .group {
    display: flex;
    align-items: center;
    gap: 5px;
    width: 100%;
    height: 18px;
    padding-left: 5px;
    box-sizing: border-box;
    border-bottom: 1px solid #8ba2b8;
    color: #46668f;
    font-size: 13px;
    font-weight: 700;
    line-height: 16px;
  }

  .box {
    width: 11px;
    height: 11px;
    fill: #f2fafd;
    stroke: #7c93a8;
  }

  .box path {
    stroke: #334;
  }

  .rows {
    margin-left: 16px;
    border-left: 1px solid #8ba2b8;
    border-bottom: 1px solid #8ba2b8;
    margin-bottom: -1px;
  }

  .prop {
    display: grid;
    grid-template-columns: 18px 127px 1fr;
    align-items: center;
    height: 18px;
    white-space: nowrap;
  }

  .prop.tall {
    height: 20px;
  }

  .mark {
    padding-left: 3px;
  }

  .prop input {
    appearance: none;
    justify-self: end;
    width: 12px;
    height: 12px;
    margin-right: 5px;
    box-sizing: border-box;
    border: 1px solid #bccad4;
    background: linear-gradient(135deg, #a9b6c2, #fff 60%) center / 6px 6px no-repeat, #fff;
  }

  .bottom {
    height: 26px;
  }

  .bottom .bar {
    height: 25px;
  }

  .scripts {
    gap: 9px;
    padding-left: 7px;
  }

  .script {
    display: flex;
    align-items: center;
    gap: 5px;
  }

  .push {
    margin-left: auto;
  }

  .treat {
    width: 212px;
    overflow: hidden;
  }

  .treat .tool {
    flex: none;
  }

  .status {
    display: flex;
    height: 20px;
    background: linear-gradient(#c4dcf2 1px, #eefaff 1px 9px, #bfe0fd 9px);
  }

  .status span:first-child {
    width: 155px;
  }

  .status span:nth-child(2) {
    flex: 1;
    max-width: 1110px;
    border: solid #95b7dc;
    border-width: 0 1px;
  }

  .taskbar {
    display: flex;
    height: 40px;
    padding-left: 2px;
    background: #e6e6e7;
  }

  .task {
    display: flex;
    align-items: center;
    justify-content: center;
    width: 49px;
    background: linear-gradient(#1476c6, #1476c6) center bottom / 0 2px no-repeat;
  }

  .task svg {
    width: 24px;
    height: 24px;
  }

  .task.run {
    background-size: 39px 2px;
  }

  .task.active {
    background-color: #fff;
    background-size: 49px 2px;
  }

  .tray {
    display: flex;
    align-items: center;
    gap: 11px;
    width: 97px;
    margin-left: auto;
    overflow: hidden;
  }

  .tray svg {
    width: 14px;
    height: 8px;
  }

  .tray .qq {
    width: 16px;
    height: 16px;
    margin-right: -4px;
  }

  .tray .battery {
    width: 17px;
    height: 14px;
  }

  .clock {
    display: flex;
    flex-direction: column;
    flex: none;
    line-height: 20px;
  }

  .clock span:first-child {
    padding-left: 12px;
  }

  .watermark {
    position: absolute;
    left: 153px;
    top: 560px;
    white-space: nowrap;
    pointer-events: none;
    font: 300 87px/106px "Noto Sans CJK SC", sans-serif;
    color: rgba(110, 70, 240, 0.32);
  }

  .watermark b {
    font: 400 76px/106px "Liberation Sans", sans-serif;
  }
</style>
